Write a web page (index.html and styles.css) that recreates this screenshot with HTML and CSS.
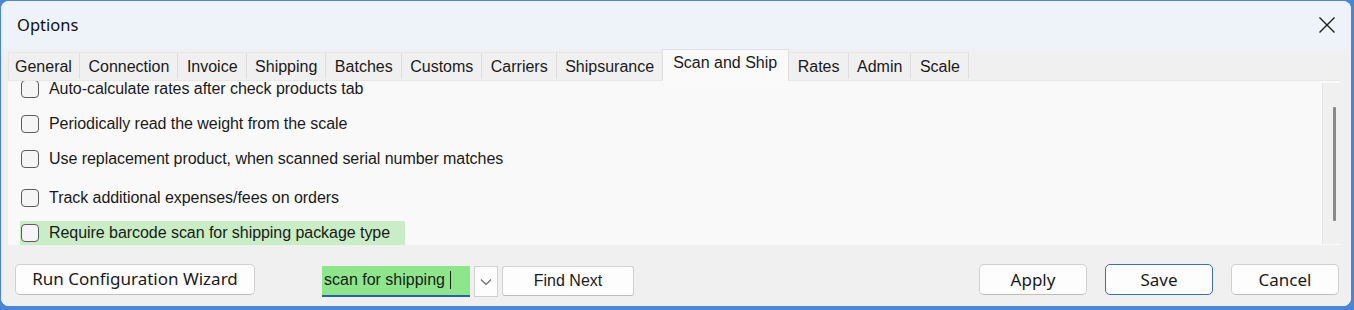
FILE: index.html
```html
<!DOCTYPE html>
<html>
<head>
<meta charset="utf-8">
<link rel="stylesheet" href="styles.css">
</head>
<body>
<div class="window">
  <div class="titlebar">
    <span class="title">Options</span>
    <svg class="close" width="18" height="18" viewBox="0 0 18 18"><path d="M1.5 1.5 L16.5 16.5 M16.5 1.5 L1.5 16.5" stroke="#1c1c1c" stroke-width="1.4" fill="none"/></svg>
  </div>
  <div class="tabs">
    <div class="tab">General</div>
    <div class="tab">Connection</div>
    <div class="tab">Invoice</div>
    <div class="tab">Shipping</div>
    <div class="tab">Batches</div>
    <div class="tab">Customs</div>
    <div class="tab">Carriers</div>
    <div class="tab">Shipsurance</div>
    <div class="tab active">Scan and Ship</div>
    <div class="tab">Rates</div>
    <div class="tab">Admin</div>
    <div class="tab">Scale</div>
  </div>
  <div class="panel">
    <div class="list">
      <div class="row"><span class="check"></span><span>Auto-calculate rates after check products tab</span></div>
      <div class="row"><span class="check"></span><span>Periodically read the weight from the scale</span></div>
      <div class="row"><span class="check"></span><span>Use replacement product, when scanned serial number matches</span></div>
      <div class="row gap-extra"><span class="check"></span><span>Track additional expenses/fees on orders</span></div>
      <div class="row hl"><span class="check"></span><span>Require barcode scan for shipping package type</span></div>
    </div>
    <div class="scrollbar"><div class="thumb"></div></div>
  </div>
  <div class="footer">
    <button class="btn wizard">Run Configuration Wizard</button>
    <div class="search"><span class="search-text">scan for shipping</span><span class="caret"></span></div>
    <div class="drop"><svg width="12" height="8" viewBox="0 0 12 8"><path d="M1 1.5 L6 6.5 L11 1.5" stroke="#666" stroke-width="1.1" fill="none"/></svg></div>
    <button class="btn find">Find Next</button>
    <div class="spacer"></div>
    <button class="btn act">Apply</button>
    <button class="btn act save">Save</button>
    <button class="btn act">Cancel</button>
  </div>
</div>
</body>
</html>
```

FILE: styles.css
```css
* { box-sizing: border-box; }
html, body { margin: 0; padding: 0; }
body {
  width: 1354px;
  height: 310px;
  background: #4a86d6;
  overflow: hidden;
  font-family: "Liberation Sans", Arial, sans-serif;
  color: #1a1a1a;
}
.window {
  margin: 1px 3px 4px 1px;
  height: 305px;
  background: #f0f0f0;
  border-radius: 8px;
  overflow: hidden;
  display: flex;
  flex-direction: column;
}
.titlebar {
  height: 48px;
  flex: none;
  background: #eef3f9;
  display: flex;
  align-items: center;
  padding: 0 15px 0 16px;
}
.title {
  font-family: "Noto Sans", "Open Sans", sans-serif;
  font-size: 16.5px;
  color: #111;
  flex: 1;
  padding-bottom: 1px;
}
.close { display: block; }
.tabs {
  height: 31px;
  flex: none;
  display: flex;
  align-items: flex-end;
  padding-left: 7px;
  background: #f0f0f0;
  position: relative;
  z-index: 1;
}
.tab {
  height: 27px;
  margin-bottom: 1px;
  padding: 1px 8px 0 8.5px;
  font-size: 16px;
  line-height: 26px;
  color: #1a1a1a;
  background: #f0f0f0;
  border-right: 1px solid #dedede;
  border-top: 1px solid #e6e6e6;
  white-space: nowrap;
}
.tab:first-child { border-left: 1px solid #e6e6e6; padding-left: 6px; padding-right: 7px; }
.tab.active {
  height: 32px;
  margin-bottom: -1px;
  background: #fafafa;
  border: 1px solid #e0e0e0;
  border-bottom: none;
  line-height: 26px;
  padding: 0 11px 0 10px;
  margin-left: -1px;
}
.panel {
  height: 165px;
  flex: none;
  margin: 0 11px 0 7px;
  background: #f9f9f9;
  display: flex;
  overflow: hidden;
  border-top: 1px solid #e8e8e8;
}
.list {
  flex: 1;
  display: flex;
  flex-direction: column;
  align-items: flex-start;
  gap: 11px;
  margin-top: -4px;
  padding-left: 12px;
}
.row {
  height: 24px;
  display: flex;
  align-items: center;
  gap: 10px;
  font-size: 16px;
  letter-spacing: -0.05px;
  padding-left: 1px;
  padding-right: 15px;
}
.row.gap-extra { margin-top: 4px; }
.row.hl { background: #c9edc5; }
.check {
  width: 18px;
  height: 18px;
  border: 1px solid #5c5c5c;
  border-radius: 4px;
  background: #f5f5f5;
  flex: none;
}
.scrollbar {
  width: 18px;
  flex: none;
  background: #f0f0f0;
  border-left: 1px solid #e6e6e6;
  margin: 2px 0 1px;
  padding-top: 24px;
  padding-left: 10px;
}
.thumb {
  width: 3px;
  height: 114px;
  background: #8a8a8a;
  border-radius: 1px;
}
.footer {
  flex: 1;
  display: flex;
  align-items: flex-start;
  padding: 19px 12px 0 14px;
  background: #f0f0f0;
}
.btn {
  height: 31px;
  background: #fdfdfd;
  border: 1px solid #d0d0d0;
  border-bottom-color: #bdbdbd;
  border-radius: 5px;
  font-family: "Noto Sans", "Open Sans", sans-serif;
  font-size: 17px;
  color: #1a1a1a;
  padding: 0;
  margin: 0;
}
.wizard { width: 240px; padding-bottom: 2px; }
.search {
  margin-left: 67px;
  margin-top: 2px;
  width: 148px;
  height: 31px;
  background: #8ee68a;
  border-bottom: 2px solid #2563b0;
  display: flex;
  align-items: center;
  padding-left: 2px;
  font-size: 16px;
  padding-bottom: 2px;
}
.caret {
  width: 1.5px;
  height: 18px;
  background: #222;
  margin-left: 5px;
}
.drop {
  margin-left: 4px;
  margin-top: 2px;
  width: 24px;
  height: 31px;
  background: #fdfdfd;
  border: 1px solid #d0d0d0;
  display: flex;
  align-items: center;
  justify-content: center;
}
.find {
  margin-left: 4px;
  margin-top: 2px;
  width: 132px;
  height: 30px;
  font-family: "Liberation Sans", Arial, sans-serif;
  font-size: 16px;
  border-radius: 3px;
}
.spacer { flex: 1; }
.act { width: 108px; margin-left: 18px; }
.save { border: 1px solid #3b6fb3; }
```
